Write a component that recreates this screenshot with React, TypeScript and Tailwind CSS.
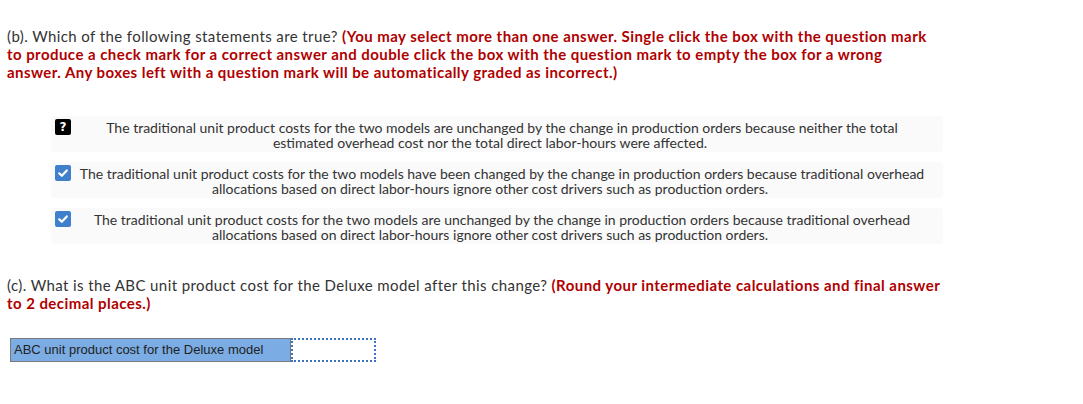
import React from "react";

const font = { fontFamily: "Lato, 'Open Sans', sans-serif" };

function QBox() {
  return (
    <div className="w-4 h-4 bg-black rounded-[2px] flex items-center justify-center text-white text-[12px] font-bold leading-none" style={{ fontFamily: "'DejaVu Sans', sans-serif" }}>
      ?
    </div>
  );
}

function CheckBox() {
  return (
    <div className="w-4 h-4 bg-[#3f7fcb] rounded-[2px] flex items-center justify-center">
      <svg width="12" height="12" viewBox="0 0 12 12">
        <path d="M2.2 6.3 L4.8 8.8 L9.8 3.4" fill="none" stroke="white" strokeWidth="2.2" strokeLinecap="round" strokeLinejoin="round" />
      </svg>
    </div>
  );
}

function Row({ box, l1, l2 }: { box: React.ReactNode; l1: string; l2: string }) {
  return (
    <div className="flex bg-[#fafafa] rounded-[4px] h-9 w-[892px]">
      <div className="pl-1 pt-[3px] w-5 shrink-0">{box}</div>
      <div className="flex-1 text-[14px] leading-[15px] text-[#333] pt-[4px]" style={font}>
        <div className="text-center whitespace-nowrap pr-[10px]">{l1}</div>
        <div className="text-center whitespace-nowrap pr-[34px]">{l2}</div>
      </div>
    </div>
  );
}

export default function App() {
  return (
    <div className="w-[1083px] h-[404px] bg-white relative" style={font}>
      <div className="pt-[27px] pl-[7px] pr-[150px] text-[15px] leading-[18px] text-[#333] tracking-[0.4px]">
        (b). Which of the following statements are true?{" "}
        <span className="font-bold text-[#b00000] tracking-[0.45px]">
          (You may select more than one answer. Single click the box with the question mark to produce a check mark for a correct answer and double click the box with the question mark to empty the box for a wrong answer. Any boxes left with a question mark will be automatically graded as incorrect.)
        </span>
      </div>
      <div className="pl-[51px] pt-[35px] flex flex-col gap-[10px]">
        <Row
          box={<QBox />}
          l1="The traditional unit product costs for the two models are unchanged by the change in production orders because neither the total"
          l2="estimated overhead cost nor the total direct labor-hours were affected."
        />
        <Row
          box={<CheckBox />}
          l1="The traditional unit product costs for the two models have been changed by the change in production orders because traditional overhead"
          l2="allocations based on direct labor-hours ignore other cost drivers such as production orders."
        />
        <Row
          box={<CheckBox />}
          l1="The traditional unit product costs for the two models are unchanged by the change in production orders because traditional overhead"
          l2="allocations based on direct labor-hours ignore other cost drivers such as production orders."
        />
      </div>
      <div className="pt-[32px] pl-[7px] pr-[130px] text-[15px] leading-[18px] text-[#333] tracking-[0.4px]">
        (c). What is the ABC unit product cost for the Deluxe model after this change?{" "}
        <span className="font-bold text-[#b00000] tracking-[0.45px]">(Round your intermediate calculations and final answer to 2 decimal places.)</span>
      </div>
      <div className="pl-[10px] pt-[26px]">
        <div className="flex w-[366px] h-[24px]">
          <div className="w-[281px] bg-[#7badE4] border border-[#7a7a7a] flex items-center pl-[3px] text-[13px] text-[#222]" style={{ fontFamily: "'Liberation Sans', Arial, sans-serif" }}>
            ABC unit product cost for the Deluxe model
          </div>
          <div className="flex-1 bg-white border-2 border-dotted border-[#3b73c0]" />
        </div>
      </div>
    </div>
  );
}
